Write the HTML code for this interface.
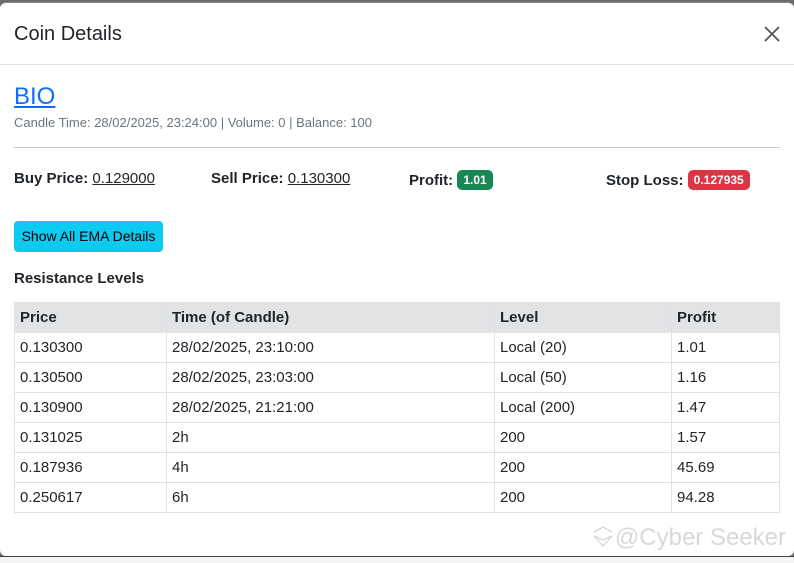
<!DOCTYPE html>
<html><head><meta charset="utf-8">
<style>
*{box-sizing:border-box;margin:0;padding:0}
body{width:794px;height:563px;overflow:hidden;background:#6b6b6b;font-family:"Segoe UI","Liberation Sans",sans-serif;color:#212529;position:relative}
.bgstrip{position:absolute;left:0;top:556px;width:794px;height:7px;background:#f4f4f4;border-top:1px solid #444}
.modal{position:absolute;left:0;top:2px;width:794px;height:554px;background:#fff;border-radius:6px;border-top:1px solid #888}
.hdr{height:62px;border-bottom:1px solid #dee2e6;position:relative}
.hdr h5{position:absolute;left:14px;top:20px;font-size:20px;font-weight:500}
.close{position:absolute;right:14px;top:23px;width:16px;height:16px}
.bio{position:absolute;left:14px;top:80px;font-size:24px;color:#0d6efd;text-decoration:underline;font-weight:500}
.sub{position:absolute;left:14px;top:112px;font-size:13px;color:#6c757d}
.hr{position:absolute;left:14px;top:144px;width:766px;border-top:1px solid #ccc}
.row{position:absolute;top:167px;font-size:15px;white-space:nowrap}
.row b{font-weight:700}
.row u{font-weight:400}
.badge{display:inline-block;color:#fff;font-size:12px;font-weight:700;padding:3px 6px;border-radius:5px;line-height:14px;vertical-align:1px}
.btn{position:absolute;left:14px;top:218px;width:149px;height:31px;background:#0dcaf0;border-radius:4px;font-size:14px;color:#000;text-align:center;line-height:31px}
.rl{position:absolute;left:14px;top:267px;font-size:15px;font-weight:600}
table{position:absolute;left:14px;top:299px;width:766px;border-collapse:collapse;font-size:15px}
td,th{border:1px solid #dee2e6;height:30px;padding:0 5px;text-align:left}
th{background:#e2e3e5;font-weight:700}
.wm{position:absolute;right:8px;top:524px;font-size:24px;color:#d8d8d8;font-weight:300}
</style></head><body>
<div class="bgstrip"></div>
<div class="modal">
<div class="hdr"><h5>Coin Details</h5>
<svg class="close" viewBox="0 0 16 16"><path d="M1 1L15 15M15 1L1 15" stroke="#555" stroke-width="1.8"/></svg></div>
<div class="bio">BIO</div>
<div class="sub">Candle Time: 28/02/2025, 23:24:00 | Volume: 0 | Balance: 100</div>
<div class="hr"></div>
<div class="row" style="left:14px"><b>Buy Price:</b> <u>0.129000</u></div>
<div class="row" style="left:211px"><b>Sell Price:</b> <u>0.130300</u></div>
<div class="row" style="left:409px"><b>Profit:</b> <span class="badge" style="background:#198754">1.01</span></div>
<div class="row" style="left:606px"><b>Stop Loss:</b> <span class="badge" style="background:#dc3545">0.127935</span></div>
<div class="btn">Show All EMA Details</div>
<div class="rl">Resistance Levels</div>
<table>
<tr><th style="width:152px">Price</th><th style="width:328px">Time (of Candle)</th><th style="width:177px">Level</th><th>Profit</th></tr>
<tr><td>0.130300</td><td>28/02/2025, 23:10:00</td><td>Local (20)</td><td>1.01</td></tr>
<tr><td>0.130500</td><td>28/02/2025, 23:03:00</td><td>Local (50)</td><td>1.16</td></tr>
<tr><td>0.130900</td><td>28/02/2025, 21:21:00</td><td>Local (200)</td><td>1.47</td></tr>
<tr><td>0.131025</td><td>2h</td><td>200</td><td>1.57</td></tr>
<tr><td>0.187936</td><td>4h</td><td>200</td><td>45.69</td></tr>
<tr><td>0.250617</td><td>6h</td><td>200</td><td>94.28</td></tr>
</table>
</div>
<div class="wm"><svg width="24" height="22" viewBox="0 0 24 22" style="vertical-align:-3px"><path d="M3 6L12 1L21 6M3 10L12 20L21 10L12 14Z" fill="none" stroke="#d8d8d8" stroke-width="1.3"/></svg>@Cyber Seeker</div>
</body></html>
